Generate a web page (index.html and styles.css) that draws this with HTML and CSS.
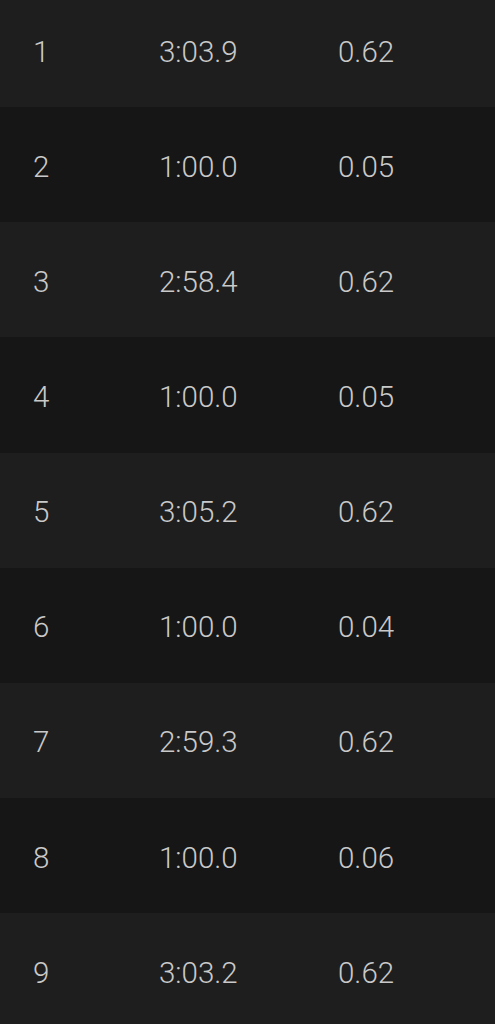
FILE: index.html
```html
<!DOCTYPE html>
<html lang="en">
  <head>
    <meta charset="UTF-8" />
    <meta name="viewport" content="width=device-width, initial-scale=1.0" />
    <title>Laps</title>
    <link rel="stylesheet" href="styles.css">
  </head>
  <body>
    <div class="laps">
      <div class="lap"><span>1</span><span>3:03.9</span><span>0.62</span></div>
      <div class="lap"><span>2</span><span>1:00.0</span><span>0.05</span></div>
      <div class="lap"><span>3</span><span>2:58.4</span><span>0.62</span></div>
      <div class="lap"><span>4</span><span>1:00.0</span><span>0.05</span></div>
      <div class="lap"><span>5</span><span>3:05.2</span><span>0.62</span></div>
      <div class="lap"><span>6</span><span>1:00.0</span><span>0.04</span></div>
      <div class="lap"><span>7</span><span>2:59.3</span><span>0.62</span></div>
      <div class="lap"><span>8</span><span>1:00.0</span><span>0.06</span></div>
      <div class="lap"><span>9</span><span>3:03.2</span><span>0.62</span></div>
    </div>
  </body>
</html>
```

FILE: styles.css
```css
html,
body {
  height: 100%;
  margin: 0;
  padding: 0;
  overflow: hidden;
}

body {
  background: #1e1e1e;
  font-family: Roboto, "Noto Sans", sans-serif;
  font-weight: 300;
  color: #c9c9c9;
}

.laps {
  margin-top: -8px;
}

.lap {
  display: grid;
  grid-template-columns: 126px 179px 1fr;
  align-items: center;
  height: 115.15px;
  box-sizing: border-box;
  padding: 4px 0 0 33px;
  font-size: 29.5px;
  background: #1e1e1e;
}

.lap:nth-child(even) {
  background: #161616;
}
```
